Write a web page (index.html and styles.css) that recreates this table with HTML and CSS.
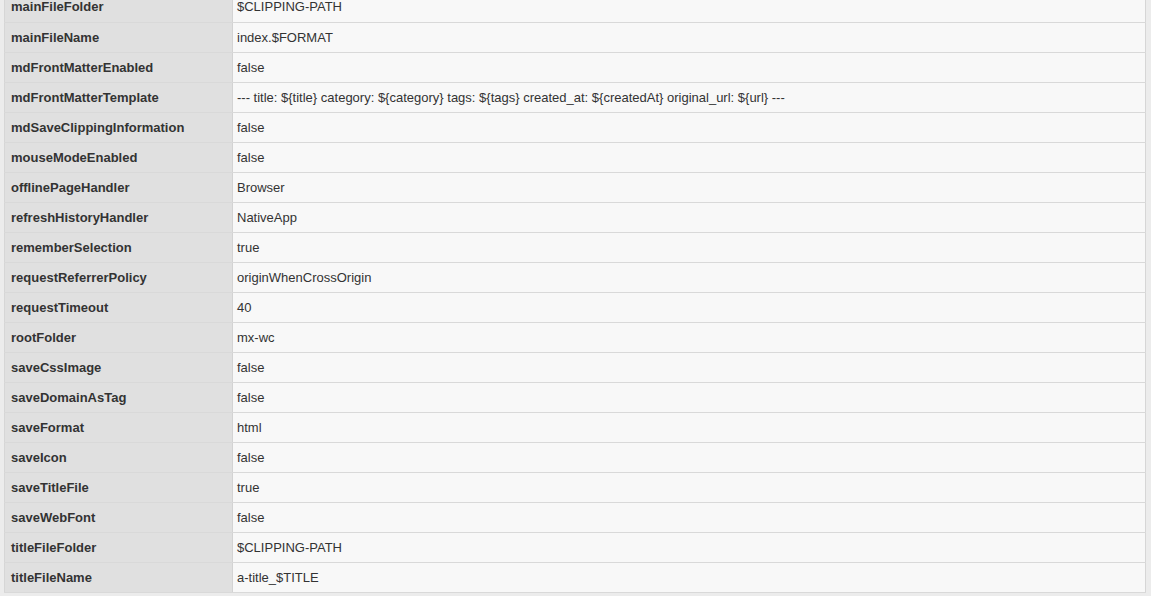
FILE: index.html
```html
<!DOCTYPE html>
<html>
<head>
<meta charset="utf-8">
<link rel="stylesheet" href="styles.css">
</head>
<body>
<table class="settings">
<tbody>
<tr><th>mainFileFolder</th><td>$CLIPPING-PATH</td></tr>
<tr><th>mainFileName</th><td>index.$FORMAT</td></tr>
<tr><th>mdFrontMatterEnabled</th><td>false</td></tr>
<tr><th>mdFrontMatterTemplate</th><td>--- title: ${title} category: ${category} tags: ${tags} created_at: ${createdAt} original_url: ${url} ---</td></tr>
<tr><th>mdSaveClippingInformation</th><td>false</td></tr>
<tr><th>mouseModeEnabled</th><td>false</td></tr>
<tr><th>offlinePageHandler</th><td>Browser</td></tr>
<tr><th>refreshHistoryHandler</th><td>NativeApp</td></tr>
<tr><th>rememberSelection</th><td>true</td></tr>
<tr><th>requestReferrerPolicy</th><td>originWhenCrossOrigin</td></tr>
<tr><th>requestTimeout</th><td>40</td></tr>
<tr><th>rootFolder</th><td>mx-wc</td></tr>
<tr><th>saveCssImage</th><td>false</td></tr>
<tr><th>saveDomainAsTag</th><td>false</td></tr>
<tr><th>saveFormat</th><td>html</td></tr>
<tr><th>saveIcon</th><td>false</td></tr>
<tr><th>saveTitleFile</th><td>true</td></tr>
<tr><th>saveWebFont</th><td>false</td></tr>
<tr><th>titleFileFolder</th><td>$CLIPPING-PATH</td></tr>
<tr><th>titleFileName</th><td>a-title_$TITLE</td></tr>
</tbody>
</table>
</body>
</html>
```
FILE: styles.css
```css
html, body {
  margin: 0;
  padding: 0;
  background: #ececec;
}
body {
  padding: 0 5px 0 4px;
  font-family: "Liberation Sans", Arial, Helvetica, sans-serif;
  font-size: 13px;
  color: #333;
}
.settings {
  width: 100%;
  margin-top: -8px;
  border-collapse: collapse;
  background: #f8f8f8;
  border: 1px solid #d6d6d6;
  border-top: none;
}
.settings th,
.settings td {
  height: 30px;
  padding: 0 5px;
  border-bottom: 1px solid #d9d9d9;
  vertical-align: middle;
  text-align: left;
  box-sizing: border-box;
}
.settings th {
  width: 228px;
  padding-left: 6px;
  background: #e0e0e0;
  font-weight: bold;
  color: #333;
  border-right: 1px solid #d3d3d3;
}
.settings td {
  padding-left: 4px;
  background: #f8f8f8;
  font-weight: normal;
}
```
